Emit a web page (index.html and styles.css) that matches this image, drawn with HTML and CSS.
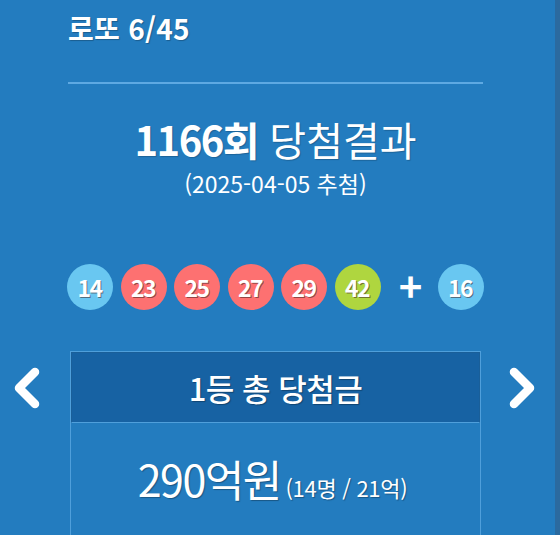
FILE: index.html
```html
<!DOCTYPE html>
<html lang="ko">
<head>
<meta charset="utf-8">
<link rel="stylesheet" href="styles.css">
</head>
<body>
<div class="page">
  <main class="main">
    <header class="top">
      <h1 class="brand">로또 6/45</h1>
      <div class="rule"></div>
    </header>
    <section class="result">
      <h2 class="title"><strong>1166회</strong> 당첨결과</h2>
      <p class="date">(2025-04-05 추첨)</p>
    </section>
    <div class="balls">
      <span class="ball blue">14</span>
      <span class="ball red">23</span>
      <span class="ball red">25</span>
      <span class="ball red">27</span>
      <span class="ball red">29</span>
      <span class="ball green">42</span>
      <span class="plus">+</span>
      <span class="ball blue">16</span>
    </div>
    <div class="prize-row">
      <button class="nav prev" aria-label="이전">
        <svg width="28" height="42" viewBox="0 0 28 42"><path d="M23 5 L7 21 L23 37" fill="none" stroke="#fff" stroke-width="8.5" stroke-linecap="round" stroke-linejoin="round"/></svg>
      </button>
      <div class="prize">
        <div class="prize-head">1등 총 당첨금</div>
        <div class="prize-body">
          <span class="amount">290억원</span>
          <span class="detail">(14명 / 21억)</span>
        </div>
      </div>
      <button class="nav next" aria-label="다음">
        <svg width="28" height="42" viewBox="0 0 28 42"><path d="M5 5 L21 21 L5 37" fill="none" stroke="#fff" stroke-width="8.5" stroke-linecap="round" stroke-linejoin="round"/></svg>
      </button>
    </div>
  </main>
  <div class="edge"></div>
</div>
</body>
</html>
```
FILE: styles.css
```css
* { box-sizing: border-box; }
html, body {
  margin: 0;
  padding: 0;
  height: 100%;
  overflow: hidden;
}
body {
  background: #237cbf;
  font-family: "Noto Sans CJK KR", "Noto Sans", sans-serif;
  color: #fff;
}
.page {
  display: flex;
  height: 100%;
}
.main {
  flex: 1;
  display: flex;
  flex-direction: column;
}
.edge {
  width: 5px;
  background: #2b6a9f;
}
.top {
  padding: 10px 72px 0 68px;
}
.brand {
  margin: 0;
  font-size: 28px;
  font-weight: 700;
  letter-spacing: 0.3px;
  line-height: 36px;
  text-shadow: 1px 1px 1px rgba(0,0,0,0.25);
}
.rule {
  margin-top: 36px;
  height: 2px;
  background: #5ea9e2;
}
.result {
  text-align: center;
  padding-top: 31px;
  padding-right: 4px;
}
.title {
  margin: 0;
  font-size: 40px;
  font-weight: 400;
  line-height: 48px;
  letter-spacing: 0;
  text-shadow: 1px 1px 1px rgba(0,0,0,0.2);
}
.title strong {
  font-weight: 700;
  letter-spacing: -1.5px;
}
.date {
  margin: 7px 0 0;
  font-size: 23px;
  line-height: 26px;
  letter-spacing: 0;
}
.balls {
  display: flex;
  align-items: center;
  padding-left: 67px;
  margin-top: 68px;
  gap: 7.5px;
}
.ball {
  width: 46px;
  height: 46px;
  border-radius: 50%;
  display: flex;
  align-items: center;
  justify-content: center;
  font-size: 23px;
  font-weight: 700;
  letter-spacing: -1.5px;
  padding-right: 1px;
  text-shadow: 1px 1px 0 rgba(60,30,30,0.55);
}
.blue { background: #69c7f1; }
.red { background: #fd7171; }
.green { background: #afd63f; }
.plus {
  width: 42px;
  text-align: center;
  font-size: 40px;
  font-weight: 700;
  line-height: 46px;
  margin-top: -4px;
  padding-left: 3px;
}
.prize-row {
  display: grid;
  grid-template-columns: 70px 411px 74px;
  align-items: start;
  margin-top: 41px;
}
.nav {
  background: none;
  border: 0;
  padding: 0;
  margin-top: 16px;
  cursor: pointer;
  line-height: 0;
}
.prev { justify-self: start; margin-left: 12px; }
.next { justify-self: start; margin-left: 28px; }
.prize {
  border: 1px solid #4f9fdb;
  border-bottom: 0;
  height: 200px;
}
.prize-head {
  background: #1762a3;
  border: 1px solid #1a5f99;
  height: 71px;
  display: flex;
  align-items: center;
  justify-content: center;
  font-size: 31px;
  font-weight: 500;
  letter-spacing: -0.5px;
  text-shadow: 1px 1px 1px rgba(0,0,0,0.3);
  border-bottom: 1px solid #4f9fdb;
}
.prize-body {
  text-align: center;
  padding-top: 24px;
  padding-right: 6px;
  text-shadow: 1px 1px 1px rgba(0,0,0,0.3);
}
.amount {
  font-size: 43px;
  letter-spacing: -1.5px;
}
.detail {
  font-size: 22px;
  letter-spacing: -0.3px;
}
```
